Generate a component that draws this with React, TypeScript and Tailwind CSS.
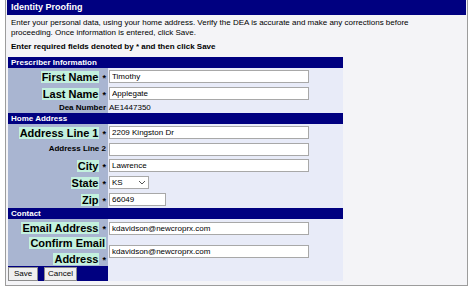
import React from 'react';

const navy = 'bg-[#000080]';

// 섹션 헤더 바
const SectionBar: React.FC<{ title: string }> = ({ title }) => (
  <div className={`col-span-2 h-[11px] ${navy} text-white font-bold text-[8px] leading-[11px] pl-[3px]`}>{title}</div>
);

const Star = () => <span className="text-[9px] font-bold leading-[10px] ml-[3px]">*</span>;

const BigLabel: React.FC<{ text: string }> = ({ text }) => (
  <span className="bg-[#c3f1de] text-[11px] font-bold leading-[14px] px-[1px]">{text}</span>
);

const Field: React.FC<{ value?: string; w?: string }> = ({ value = '', w = 'w-[200px]' }) => (
  <input
    readOnly
    value={value}
    className={`${w} h-[13px] border border-[#a8a8a8] bg-white text-[8px] leading-[11px] px-[2px] text-black outline-none`}
  />
);

type RowProps = { label: React.ReactNode; children: React.ReactNode; h: string };

const Row: React.FC<RowProps> = ({ label, children, h }) => (
  <>
    <div className={`${h} bg-[#a9b5d1] flex items-center justify-end text-right pr-[2px] overflow-hidden`}>
      <div className="text-[8px] leading-[10px]">{label}</div>
    </div>
    <div className={`${h} bg-[#e8ebf8] flex items-center pl-[1px] text-[8px] leading-[10px]`}>{children}</div>
  </>
);

const App: React.FC = () => {
  return (
    <div className="w-[474px] h-[289px] bg-white font-['Liberation_Sans',Arial,sans-serif] text-black overflow-hidden leading-[10px]">
      <div className="ml-[5px] w-[463px] h-[286px] border-l border-r border-b border-[#9c9c9c] bg-[#f4f4f7] px-[1px]">
        {/* 타이틀 */}
        <div className={`h-[15px] ${navy} text-white font-bold text-[9px] leading-[15px] pl-[4px]`}>Identity Proofing</div>

        <p className="text-[8px] leading-[10px] pl-[4px] pr-[20px] mt-[3px]">
          Enter your personal data, using your home address. Verify the DEA is accurate and make any corrections before
          proceeding. Once information is entered, click Save.
        </p>
        <p className="text-[8px] font-bold leading-[10px] pl-[4px] mt-[4px]">
          Enter required fields denoted by * and then click Save
        </p>

        {/* 입력 테이블 */}
        <div className="ml-[1px] mt-[5px] w-[335px] grid grid-cols-[100px_235px]">
          <SectionBar title="Prescriber Information" />
          <Row h="h-[17px]" label={<><BigLabel text="First Name" /><Star /></>}>
            <Field value="Timothy" />
          </Row>
          <Row h="h-[17px]" label={<><BigLabel text="Last Name" /><Star /></>}>
            <Field value="Applegate" />
          </Row>
          <Row h="h-[11px]" label={<span className="font-bold">Dea Number</span>}>
            <span>AE1447350</span>
          </Row>

          <SectionBar title="Home Address" />
          <Row h="h-[17px]" label={<><BigLabel text="Address Line 1" /><Star /></>}>
            <Field value="2209 Kingston Dr" />
          </Row>
          <Row h="h-[16px]" label={<span className="font-bold">Address Line 2</span>}>
            <Field />
          </Row>
          <Row h="h-[17px]" label={<><BigLabel text="City" /><Star /></>}>
            <Field value="Lawrence" />
          </Row>
          <Row h="h-[17px]" label={<><BigLabel text="State" /><Star /></>}>
            <div className="w-[40px] h-[13px] border border-[#a8a8a8] bg-white flex items-center justify-between px-[2px]">
              <span className="text-[8px]">KS</span>
              <svg width="8" height="5" viewBox="0 0 8 5" fill="none">
                <path d="M1 1l3 3 3-3" stroke="#555" strokeWidth="1" />
              </svg>
            </div>
          </Row>
          <Row h="h-[17px]" label={<><BigLabel text="Zip" /><Star /></>}>
            <Field value="66049" w="w-[57px]" />
          </Row>

          <SectionBar title="Contact" />
          <Row h="h-[18px]" label={<><BigLabel text="Email Address" /><Star /></>}>
            <Field value="kdavidson@newcroprx.com" />
          </Row>
          <Row
            h="h-[29px]"
            label={
              <div className="leading-[14px]">
                <BigLabel text="Confirm Email" />
                <br />
                <BigLabel text="Address" />
                <Star />
              </div>
            }
          >
            <Field value="kdavidson@newcroprx.com" />
          </Row>

          {/* 버튼 */}
          <div className={`h-[15px] ${navy} flex items-center gap-[6px]`}>
            <button className="w-[30px] h-[14px] bg-[#efefef] border border-[#8c8c8c] text-[8px] leading-[12px]">Save</button>
            <button className="w-[33px] h-[14px] bg-[#efefef] border border-[#8c8c8c] text-[8px] leading-[12px]">Cancel</button>
          </div>
          <div className="h-[15px] bg-[#e8ebf8]" />
        </div>
      </div>
    </div>
  );
};

export default App;
